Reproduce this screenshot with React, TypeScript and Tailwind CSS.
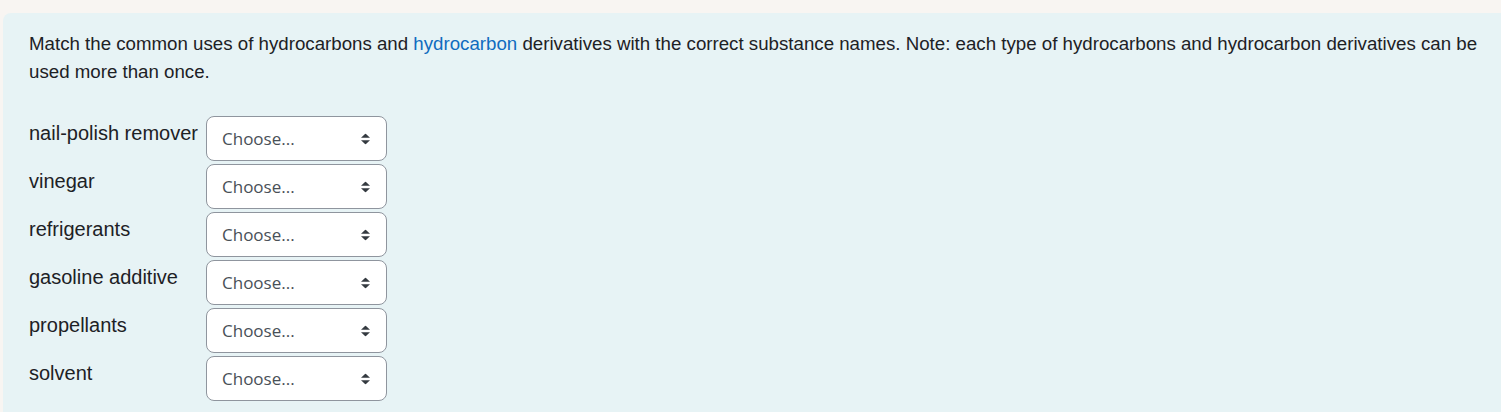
import React from 'react';

const items = ['nail-polish remover', 'vinegar', 'refrigerants', 'gasoline additive', 'propellants', 'solvent'];

function ChooseSelect() {
  return (
    <div className="relative w-[181px] h-[45px]">
      <select
        className="w-full h-full appearance-none bg-white border border-[#8f959e] rounded-[8px] pl-[15px] pr-8 text-[17px] text-[#495057] outline-none"
        style={{ fontFamily: '"Open Sans", sans-serif' }}
        defaultValue=""
      >
        <option value="">Choose...</option>
      </select>
      <svg className="pointer-events-none absolute right-[17px] top-1/2 -translate-y-1/2" width="9" height="11" viewBox="0 0 9 11">
        <polygon points="4.5,0 9,4.3 0,4.3" fill="#343a40" />
        <polygon points="0,6.7 9,6.7 4.5,11" fill="#343a40" />
      </svg>
    </div>
  );
}

export default function App() {
  return (
    <div className="min-h-[412px] bg-[#f8f5f2] pt-[13px] pl-[3px]" style={{ fontFamily: '"Liberation Sans", Arial, sans-serif' }}>
      <div className="bg-[#e7f3f5] rounded-tl-[8px] min-h-[399px] pl-[26px] pr-[13px] pt-[17px] text-[#1d2125]">
        <p className="text-[18.7px] leading-[28px]">
          Match the common uses of hydrocarbons and <span className="text-[#0f6cbf]">hydrocarbon</span> derivatives with the correct substance names. Note: each type of hydrocarbons and hydrocarbon derivatives can be used more than once.
        </p>
        <div className="mt-[30px] flex flex-col gap-[3px]">
          {items.map((item) => (
            <div key={item} className="flex items-start">
              <div className="w-[177px] shrink-0 text-[20px] leading-[28px] pt-[3px] whitespace-nowrap">{item}</div>
              <ChooseSelect />
            </div>
          ))}
        </div>
      </div>
    </div>
  );
}
